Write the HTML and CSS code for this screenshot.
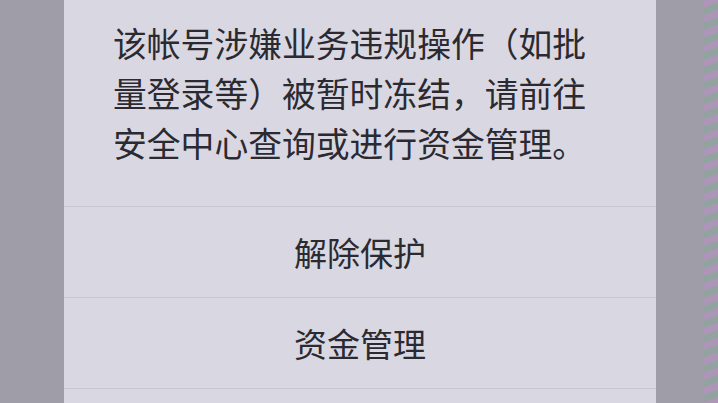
FILE: index.html
```html
<!DOCTYPE html>
<html lang="zh-CN">
<head>
<meta charset="utf-8">
<link rel="stylesheet" href="styles.css">
</head>
<body>
<div class="screen">
  <div class="side side-left"></div>
  <div class="dialog">
    <p class="message">该帐号涉嫌业务违规操作（如批量登录等）被暂时冻结，请前往安全中心查询或进行资金管理。</p>
    <div class="actions">
      <div class="action">解除保护</div>
      <div class="action">资金管理</div>
      <div class="action action-cut"></div>
    </div>
  </div>
  <div class="side side-right"><div class="fringe"></div></div>
</div>
</body>
</html>
```
FILE: styles.css
```css
html, body {
  margin: 0;
  padding: 0;
  width: 718px;
  height: 403px;
  overflow: hidden;
  background: #9f9ea8;
}
.screen {
  display: flex;
  width: 718px;
  height: 403px;
  overflow: hidden;
  font-family: "Noto Sans CJK SC", "Noto Sans", sans-serif;
}
.side {
  background: #9f9ea8;
}
.side-left {
  width: 64px;
}
.side-right {
  width: 62px;
  display: flex;
  justify-content: flex-end;
}
.fringe {
  width: 14px;
  height: 100%;
  background:
    repeating-linear-gradient(160deg, rgba(190,140,200,0.55) 0 7px, rgba(130,170,150,0.55) 7px 14px),
    #a09fa9;
  opacity: 0.8;
}
.dialog {
  width: 592px;
  background: #d9d8e2;
  display: flex;
  flex-direction: column;
}
.message {
  margin: 0;
  padding: 18px 50px 38px 49px;
  font-size: 33.8px;
  line-height: 50px;
  color: #2b2a31;
}
.actions {
  display: flex;
  flex-direction: column;
}
.action {
  height: 90px;
  border-top: 1px solid #c8c7d1;
  display: flex;
  align-items: center;
  justify-content: center;
  font-size: 33px;
  color: #2b2a31;
}
.action-cut {
  height: 16px;
}
```
